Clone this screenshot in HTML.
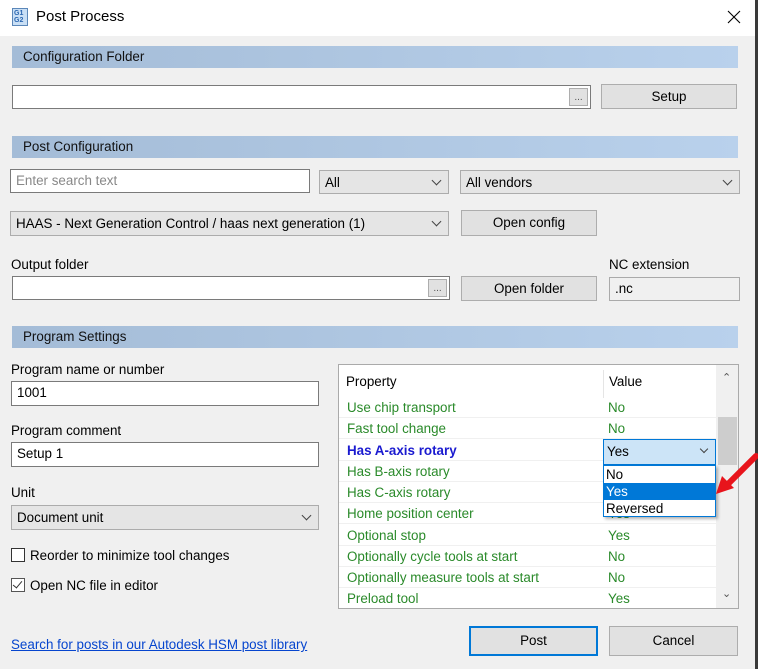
<!DOCTYPE html>
<html><head><meta charset="utf-8"><style>
*{box-sizing:border-box;margin:0;padding:0}
body{width:758px;height:669px;overflow:hidden;background:#f0f0f0;font-family:"Liberation Sans",sans-serif;font-size:13.4px;color:#000;position:relative}
.a{position:absolute}
.hdr{position:absolute;left:12px;width:726px;height:22px;background:linear-gradient(90deg,#a4bcd7,#b9d1ec);padding:3px 0 0 11px;color:#111}
.inp{position:absolute;background:#fff;border:1px solid #7a7a7a;height:24px;padding:3px 5px}
.btn{position:absolute;background:#e1e1e1;border:1px solid #adadad;text-align:center;line-height:23px}
.cmb{position:absolute;background:#e5e5e5;border:1px solid #acacac;height:24px;padding:4px 5px}
.cmb:after{content:"";position:absolute;right:8px;top:6px;width:6px;height:6px;border-right:1.3px solid #444;border-bottom:1.3px solid #444;transform:rotate(45deg)}
.dots{position:absolute;right:2px;top:2px;width:19px;height:18px;background:#e1e1e1;border:1px solid #adadad;font-size:10px;text-align:center;line-height:18px;color:#555}
.lbl{position:absolute}
.row{position:absolute;left:0;width:377px;height:21px;border-bottom:1px solid #f0f0f0;color:#2a8a2a}
.row span{position:absolute;top:3px}
.row .v{left:269px}
.row .p{left:8px}
.cb{position:absolute;width:14px;height:14px;border:1px solid #333;background:#fff}
</style></head><body>
<div class="a" style="left:0;top:0;width:755px;height:36px;background:#fff"></div>
<div class="a" style="left:755px;top:0;width:3px;height:669px;background:#3a3a3a"></div>
<div class="a" style="left:12px;top:8px;width:16px;height:18px;background:#c9dff5;border:1px solid #5b87b9;font-size:7px;line-height:7px;color:#2a66b0;font-weight:bold;padding:1px 0 0 1px">G1<br>G2</div>
<div class="a" style="left:36px;top:8px;font-size:15px">Post Process</div>
<svg class="a" style="left:727px;top:10px" width="14" height="14"><path d="M1 1L13 13M13 1L1 13" stroke="#000" stroke-width="1.1"/></svg>

<div class="hdr" style="top:46px">Configuration Folder</div>
<div class="inp" style="left:12px;top:85px;width:579px"><div class="dots">...</div></div>
<div class="btn" style="left:601px;top:84px;width:136px;height:25px">Setup</div>

<div class="hdr" style="top:136px">Post Configuration</div>
<div class="inp" style="left:10px;top:169px;width:300px;color:#888">Enter search text</div>
<div class="cmb" style="left:319px;top:170px;width:130px">All</div>
<div class="cmb" style="left:460px;top:170px;width:280px">All vendors</div>
<div class="cmb" style="left:10px;top:211px;width:439px;height:25px">HAAS - Next Generation Control / haas next generation (1)</div>
<div class="btn" style="left:461px;top:210px;width:136px;height:26px">Open config</div>

<div class="lbl" style="left:11px;top:257px">Output folder</div>
<div class="inp" style="left:12px;top:276px;width:438px"><div class="dots">...</div></div>
<div class="btn" style="left:461px;top:276px;width:136px;height:25px">Open folder</div>
<div class="lbl" style="left:609px;top:257px">NC extension</div>
<div class="inp" style="left:609px;top:277px;width:131px;background:#f0f0f0;border-color:#aaa">.nc</div>

<div class="hdr" style="top:326px">Program Settings</div>
<div class="lbl" style="left:11px;top:362px">Program name or number</div>
<div class="inp" style="left:11px;top:381px;width:308px;height:25px">1001</div>
<div class="lbl" style="left:11px;top:423px">Program comment</div>
<div class="inp" style="left:11px;top:442px;width:308px;height:25px">Setup 1</div>
<div class="lbl" style="left:11px;top:485px">Unit</div>
<div class="cmb" style="left:11px;top:505px;width:308px;height:25px">Document unit</div>
<div class="cb" style="left:11px;top:548px"></div>
<div class="lbl" style="left:30px;top:548px">Reorder to minimize tool changes</div>
<div class="cb" style="left:11px;top:578px;border-color:#555"><div style="position:absolute;left:3px;top:0px;width:5px;height:9px;border-right:1.5px solid #333;border-bottom:1.5px solid #333;transform:rotate(40deg)"></div></div>
<div class="lbl" style="left:30px;top:578px">Open NC file in editor</div>
<div class="lbl" style="left:11px;top:637px;color:#0645ce;text-decoration:underline">Search for posts in our Autodesk HSM post library</div>
<div class="btn" style="left:469px;top:626px;width:129px;height:30px;border:2px solid #0078d7;line-height:26px">Post</div>
<div class="btn" style="left:609px;top:626px;width:129px;height:30px;line-height:28px">Cancel</div>

<div class="a" style="left:338px;top:364px;width:401px;height:245px;background:#fff;border:1px solid #aaa;overflow:hidden">
 <div class="a" style="left:7px;top:9px">Property</div>
 <div class="a" style="left:264px;top:5px;width:1px;height:28px;background:#e5e5e5"></div>
 <div class="a" style="left:270px;top:9px">Value</div>
 <div class="a" style="left:377px;top:0;width:23px;height:245px;background:#f0f0f0"></div>
 <div class="a" style="left:379px;top:52px;width:19px;height:48px;background:#cdcdcd"></div>
 <div class="a" style="left:383px;top:6px;font-size:11px;color:#555">&#8963;</div>
 <div class="a" style="left:383px;top:222px;font-size:11px;color:#555">&#8964;</div>
 <div class="row" style="top:32px"><span class="p">Use chip transport</span><span class="v">No</span></div>
 <div class="row" style="top:53px"><span class="p">Fast tool change</span><span class="v">No</span></div>
 <div class="row" style="top:75px;color:#1a1ad0;font-weight:bold"><span class="p">Has A-axis rotary</span></div>
 <div class="row" style="top:96px"><span class="p">Has B-axis rotary</span></div>
 <div class="row" style="top:117px"><span class="p">Has C-axis rotary</span></div>
 <div class="row" style="top:138px"><span class="p">Home position center</span><span class="v">Yes</span></div>
 <div class="row" style="top:160px"><span class="p">Optional stop</span><span class="v">Yes</span></div>
 <div class="row" style="top:181px"><span class="p">Optionally cycle tools at start</span><span class="v">No</span></div>
 <div class="row" style="top:202px"><span class="p">Optionally measure tools at start</span><span class="v">No</span></div>
 <div class="row" style="top:223px"><span class="p">Preload tool</span><span class="v">Yes</span></div>
 <div class="a" style="left:264px;top:74px;width:113px;height:26px;background:#cce4f7;border:1px solid #0078d7;padding:4px 3px">Yes<div class="a" style="right:8px;top:6px;width:6px;height:6px;border-right:1.3px solid #444;border-bottom:1.3px solid #444;transform:rotate(45deg)"></div></div>
 <div class="a" style="left:264px;top:100px;width:113px;height:52px;background:#fff;border:1px solid #0078d7;box-shadow:2px 2px 3px rgba(0,0,0,.3)">
  <div style="height:17px;padding:1px 2px">No</div>
  <div style="height:17px;padding:1px 2px;background:#0078d7;color:#fff">Yes</div>
  <div style="height:17px;padding:1px 2px">Reversed</div>
 </div>
</div>
<svg class="a" style="left:712px;top:450px" width="46" height="48"><path d="M44 6 L14 36" stroke="#e8141c" stroke-width="6" stroke-linecap="round"/><path d="M4 44 L10 26 L22 38 Z" fill="#e8141c"/></svg>
</body></html>
